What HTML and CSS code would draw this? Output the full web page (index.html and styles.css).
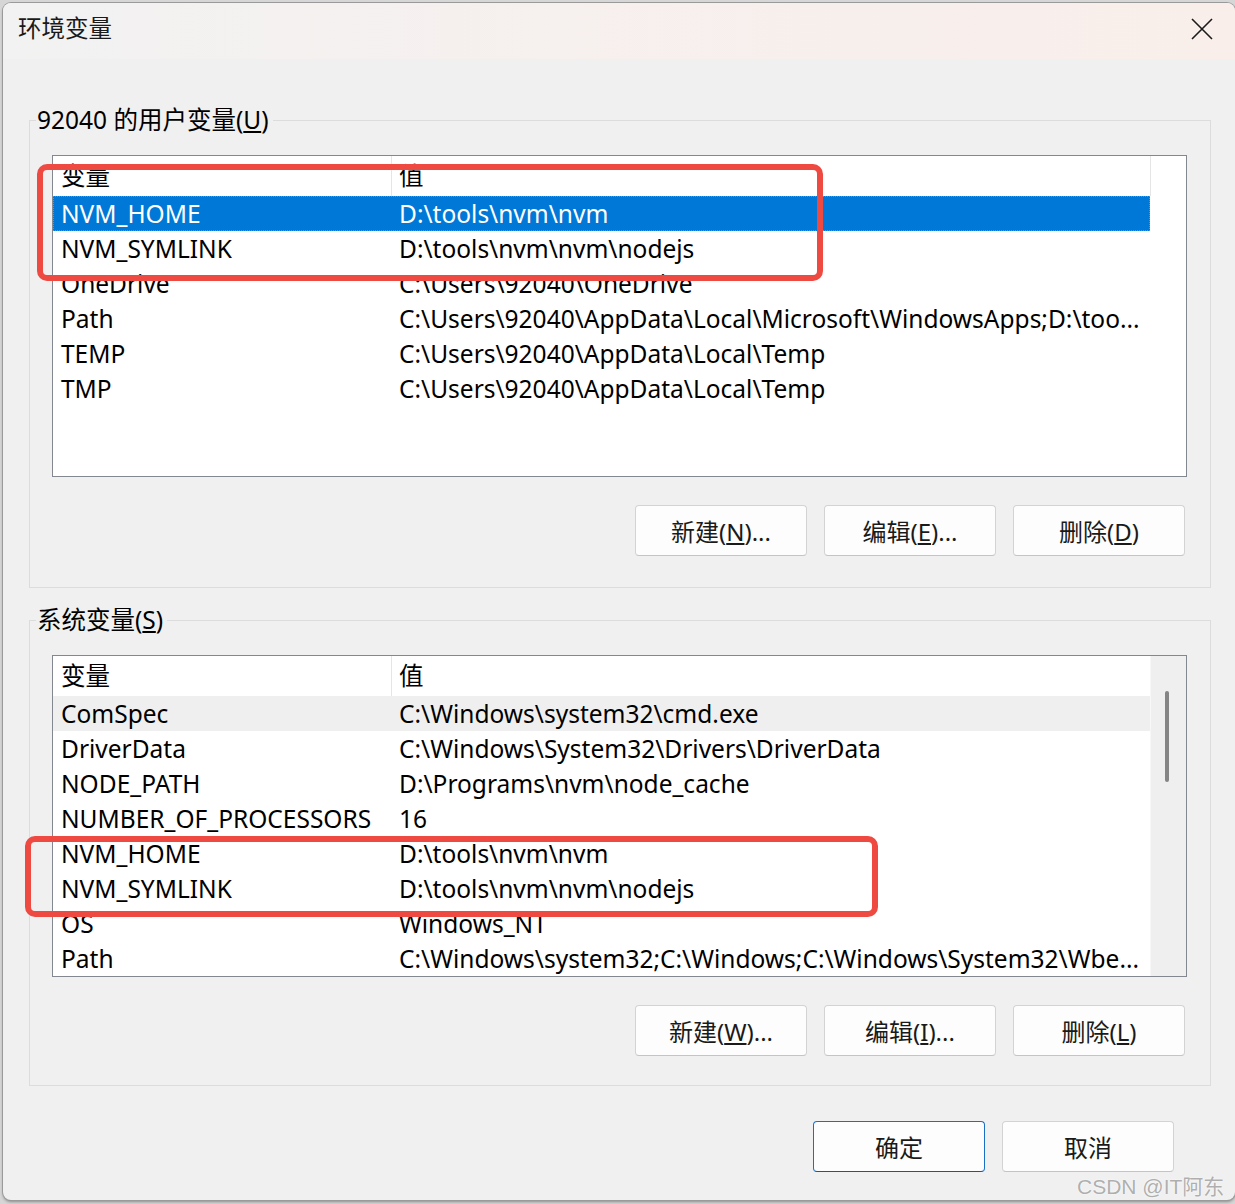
FILE: index.html
```html
<!DOCTYPE html>
<html lang="zh-CN">

<head>
    <meta charset="UTF-8">
    <title>环境变量</title>
    <link rel="stylesheet" href="styles.css">
</head>

<body>
    <div class="window">
        <!-- Title bar -->
        <div class="titlebar">
            <span class="title">环境变量</span>
            <svg class="close" width="22" height="22" viewBox="0 0 22 22">
                <path d="M1 1 L21 21 M21 1 L1 21" stroke="#1b1b1b" stroke-width="1.6" fill="none" />
            </svg>
        </div>

        <div class="content">
            <!-- User variables -->
            <fieldset class="group">
                <legend>92040 的用户变量(<u>U</u>)</legend>
                <div class="group-body">
                    <div class="list">
                        <div class="list-main">
                            <div class="list-head">
                                <span class="col1">变量</span>
                                <span class="col2">值</span>
                            </div>
                            <div class="row selected">
                                <span class="col1">NVM_HOME</span>
                                <span class="col2">D:\tools\nvm\nvm</span>
                            </div>
                            <div class="row">
                                <span class="col1">NVM_SYMLINK</span>
                                <span class="col2">D:\tools\nvm\nvm\nodejs</span>
                            </div>
                            <div class="row">
                                <span class="col1">OneDrive</span>
                                <span class="col2">C:\Users\92040\OneDrive</span>
                            </div>
                            <div class="row">
                                <span class="col1">Path</span>
                                <span class="col2">C:\Users\92040\AppData\Local\Microsoft\WindowsApps;D:\too...</span>
                            </div>
                            <div class="row">
                                <span class="col1">TEMP</span>
                                <span class="col2">C:\Users\92040\AppData\Local\Temp</span>
                            </div>
                            <div class="row">
                                <span class="col1">TMP</span>
                                <span class="col2">C:\Users\92040\AppData\Local\Temp</span>
                            </div>
                        </div>
                        <div class="list-side">
                            <div class="head-cap"></div>
                        </div>
                    </div>
                    <div class="buttons">
                        <button class="btn">新建(<u>N</u>)...</button>
                        <button class="btn">编辑(<u>E</u>)...</button>
                        <button class="btn">删除(<u>D</u>)</button>
                    </div>
                </div>
            </fieldset>

            <!-- System variables -->
            <fieldset class="group group-sys">
                <legend>系统变量(<u>S</u>)</legend>
                <div class="group-body body-sys">
                    <div class="list">
                        <div class="list-main">
                            <div class="list-head">
                                <span class="col1">变量</span>
                                <span class="col2">值</span>
                            </div>
                            <div class="row hover">
                                <span class="col1">ComSpec</span>
                                <span class="col2">C:\Windows\system32\cmd.exe</span>
                            </div>
                            <div class="row">
                                <span class="col1">DriverData</span>
                                <span class="col2">C:\Windows\System32\Drivers\DriverData</span>
                            </div>
                            <div class="row">
                                <span class="col1">NODE_PATH</span>
                                <span class="col2">D:\Programs\nvm\node_cache</span>
                            </div>
                            <div class="row">
                                <span class="col1">NUMBER_OF_PROCESSORS</span>
                                <span class="col2">16</span>
                            </div>
                            <div class="row">
                                <span class="col1">NVM_HOME</span>
                                <span class="col2">D:\tools\nvm\nvm</span>
                            </div>
                            <div class="row">
                                <span class="col1">NVM_SYMLINK</span>
                                <span class="col2">D:\tools\nvm\nvm\nodejs</span>
                            </div>
                            <div class="row">
                                <span class="col1">OS</span>
                                <span class="col2">Windows_NT</span>
                            </div>
                            <div class="row">
                                <span class="col1">Path</span>
                                <span class="col2">C:\Windows\system32;C:\Windows;C:\Windows\System32\Wbe...</span>
                            </div>
                        </div>
                        <div class="list-side scrollbar">
                            <div class="thumb"></div>
                        </div>
                    </div>
                    <div class="buttons">
                        <button class="btn">新建(<u>W</u>)...</button>
                        <button class="btn">编辑(<u>I</u>)...</button>
                        <button class="btn">删除(<u>L</u>)</button>
                    </div>
                </div>
            </fieldset>

            <div class="dialog-buttons">
                <button class="btn btn-default">确定</button>
                <button class="btn">取消</button>
            </div>
        </div>
    </div>

    <!-- red annotation boxes -->
    <div class="mark mark-user"></div>
    <div class="mark mark-sys"></div>

    <div class="watermark">CSDN @IT阿东</div>
</body>

</html>
```

FILE: styles.css
```css
body {
    margin: 0;
    width: 1235px;
    height: 1204px;
    overflow: hidden;
    position: relative;
    background-color: #d6d6d6;
    font-family: "Noto Sans", "Noto Sans CJK SC", sans-serif;
    color: #000;
}

.window {
    margin: 3px 0 0 3px;
    width: 1232px;
    height: 1197px;
    background-color: #f0f0f0;
    border-radius: 8px;
    box-shadow: 0 0 0 1px #9a9a9a, 0 2px 3px rgba(0, 0, 0, 0.35);
    overflow: hidden;
}

.titlebar {
    height: 56px;
    display: flex;
    align-items: center;
    justify-content: space-between;
    padding: 0 22px 0 15px;
    background: linear-gradient(90deg, #f2f2f2 0%, #f6f0ee 45%, #f9eeea 100%);
}

.title {
    font-size: 23.5px;
    color: #1a1a1a;
    margin-top: -8px;
}

.close {
    display: block;
    margin-top: -5px;
}

.content {
    padding: 46px 24px 0 26px;
}

.group {
    margin: 0;
    padding: 0;
    border: 1px solid #dcdcdc;
    min-width: 0;
}

.group legend {
    margin-left: 6px;
    padding: 0 4px 0 1px;
    font-size: 24.5px;
    line-height: 30px;
    color: #000;
}

.group-sys {
    margin-top: 17px;
}

.group-body {
    padding: 20px 23px 31px 22px;
}

.body-sys {
    padding-bottom: 29px;
}

.list {
    height: 322px;
    box-sizing: border-box;
    border: 1px solid #828790;
    background-color: #fff;
    display: flex;
    overflow: hidden;
}

.list-main {
    width: 1097px;
    font-size: 24.5px;
}

.list-head {
    height: 40px;
    display: flex;
    align-items: center;
}

.list-head .col1 {
    border-right: 1px solid #e5e5e5;
    height: 40px;
    line-height: 40px;
}

.list-head .col2 {
    line-height: 40px;
}

.col1 {
    width: 339px;
    padding-left: 8px;
    box-sizing: border-box;
    flex-shrink: 0;
    white-space: nowrap;
    overflow: hidden;
}

.col2 {
    padding-left: 7px;
    white-space: nowrap;
    overflow: hidden;
}

.row {
    height: 35px;
    line-height: 36px;
    display: flex;
    box-sizing: border-box;
}

.row.selected {
    background-color: #0078d7;
    color: #fff;
    outline: 1px dotted #b5813c;
    outline-offset: -1px;
}

.row.hover {
    background-color: #efefef;
}

.list-side {
    flex: 1;
}

.head-cap {
    height: 40px;
    border-left: 1px solid #e5e5e5;
}

.scrollbar {
    background-color: #efefef;
    border-left: 1px solid #f7f7f7;
}

.thumb {
    margin: 35px 0 0 14px;
    width: 4px;
    height: 91px;
    border-radius: 2px;
    background-color: #858585;
}

.buttons {
    display: flex;
    justify-content: flex-end;
    gap: 17px;
    margin-top: 28px;
    margin-right: 2px;
}

.btn {
    width: 172px;
    height: 51px;
    box-sizing: border-box;
    border: 1px solid #d3d3d3;
    border-bottom-color: #c4c4c4;
    border-radius: 4px;
    background-color: #fdfdfd;
    font-family: "Noto Sans", "Noto Sans CJK SC", sans-serif;
    font-size: 24px;
    color: #1a1a1a;
    padding: 0;
}

.dialog-buttons {
    display: flex;
    justify-content: flex-end;
    gap: 17px;
    margin-top: 35px;
    padding-right: 37px;
}

.btn-default {
    border: 1px solid #1a6fc4;
    border-bottom-color: #0a5aa8;
}

.mark {
    position: absolute;
    border: 6px solid #ef4a42;
    border-radius: 10px;
    box-sizing: border-box;
}

.mark-user {
    left: 37px;
    top: 164px;
    width: 786px;
    height: 117px;
}

.mark-sys {
    left: 25px;
    top: 836px;
    width: 853px;
    height: 81px;
}

.watermark {
    position: absolute;
    left: 1077px;
    top: 1170px;
    font-family: "Liberation Sans", "Noto Sans CJK SC", sans-serif;
    font-size: 21px;
    white-space: nowrap;
    color: rgba(150, 150, 150, 0.75);
    text-shadow: 0 0 2px #fff;
}
```
